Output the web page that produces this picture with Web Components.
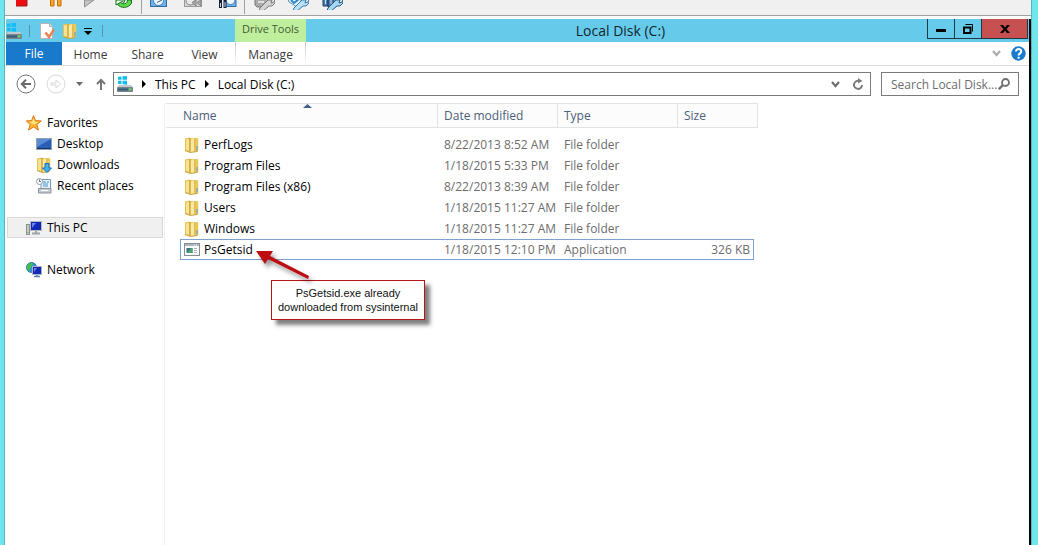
<!DOCTYPE html>
<html lang="en">
<head>
<meta charset="utf-8">
<title>Local Disk (C:)</title>
<style>
    html, body {
        height: 100%;
        margin: 0;
    }

    body {
        background: #6ee6ec;
        font-family: "Open Sans", "Noto Sans", sans-serif;
        font-size: 12px;
        color: #000;
        overflow: hidden;
    }
</style>
</head>
<body>
<remote-frame>
    <tool-strip slot="tools"></tool-strip>
    <explorer-window>
        <title-bar slot="top" heading="Local Disk (C:)" context="Drive Tools"></title-bar>
        <ribbon-tabs slot="top"></ribbon-tabs>
        <address-bar slot="top"></address-bar>
        <nav-pane slot="side">
            <nav-item icon="star">Favorites</nav-item>
            <nav-item icon="desktop" child>Desktop</nav-item>
            <nav-item icon="downloads" child>Downloads</nav-item>
            <nav-item icon="recent" child>Recent places</nav-item>
            <nav-item icon="computer" group current>This PC</nav-item>
            <nav-item icon="network" group>Network</nav-item>
        </nav-pane>
        <file-list></file-list>
        <call-out>PsGetsid.exe already<br>downloaded from sysinternal</call-out>
    </explorer-window>
</remote-frame>

<script>
const DRIVE = `
    <path d="M1 .8L4.500.4v3.400H1zM5.500.3L10 0v3.800H5.500zM1 4.800h3.500v3.400L1 7.800zM5.500 4.800H10v3.900l-4.500-.4z" fill="#12bdf5"/>
    <path d="M2 9h12l2 2.500H0z" fill="#c4c9cd"/>
    <rect y="11" width="16" height="5" rx="1" fill="#77828a"/>
    <rect x="1" y="12.500" width="10" height="2" fill="#2f5f7c"/>
    <rect x="12" y="12.500" width="2.500" height="1.800" fill="#5fe05d"/>`;

const FOLDER = `
    <path d="M1 1.500L6 .5v14.500L1 13.500z" fill="#e5c353"/>
    <path d="M2 2.500l3-.6v11.800l-3-.9z" fill="#f7e392"/>
    <path d="M6 1h7.500l.8 1v12l-1.300 1H6z" fill="#e9c95c"/>
    <path d="M6.500 2.500l4-1.500v13.500l-4 1z" fill="#f9e89f"/>
    <path d="M6 1v14.500" stroke="#c59c34"/>
    <path d="M10.800 1.500V14" stroke="#d6b044"/>
    <path d="M13 9v4.500" stroke="#4f9bd0"/>
    <path d="M1 13.500l5.300 2 7-1" stroke="#c9a23c" fill="none"/>`;

const WRENCH = (fill, line) => `
    <path d="M6 8l8-8h4l-1 3 3-1 1-2v3l-3 3-3 0-7 6-3-1z" fill="${fill}" stroke="${line}"/>`;

// name: [width, height, markup]
const ICONS = {
    stop: [12, 7, `<rect width="11" height="6" fill="#ed0c10"/><path d="M0 6h11V0" fill="none" stroke="#9c1c12"/>`],
    pause: [12, 7, `<path d="M.5 0v6h3.500V0M7.500 0v6h3.500V0" fill="#ffa51f" stroke="#b86f0c"/>`],
    play: [12, 8, `<path d="M.5 0v7L10 0z" fill="#c4c4c4" stroke="#8f8f8f"/>`],
    reload: [18, 9, `
        <path d="M2 3.500C5 9 14 8.500 16.500 3V0h-4c0 4-4 5-7 2.500z" fill="#5fdc4a" stroke="#13701c"/>
        <path d="M1 0h9L9 2.500 7 1.500 1 5z" fill="#f4fff0" stroke="#13701c"/>`],
    snapshot: [18, 9, `
        <rect x=".5" y="-4" width="16" height="10.500" fill="#6db2ea" stroke="#2c6ca3"/>
        <circle cx="8.500" cy=".5" r="5" fill="#edf7ff" stroke="#4c7ba8"/>
        <path d="M7 2.500l5-2.500" stroke="#355d86"/>`],
    revert: [19, 9, `
        <rect x=".5" y="-4" width="17" height="10.500" fill="#d4d4d4" stroke="#999"/>
        <circle cx="6.500" cy=".5" r="4.500" fill="#e8e8e8" stroke="#888"/>
        <path d="M12 0v6L8 2.500zM17 0v6l-4-3.500z" fill="#aaa" stroke="#888"/>`],
    manage: [19, 9, `
        <rect x="7.500" y="-4" width="10.500" height="10.500" fill="#6db2ea" stroke="#2c6ca3"/>
        <circle cx="12.500" cy="0" r="4.500" fill="#edf7ff" stroke="#4c7ba8"/>
        <path d="M2.500 0v8M7 0v8" stroke="#14213a" stroke-width="3"/><path d="M2.500 3v4M7 2v5" stroke="#c4d8e8"/>`],
    saveGray: [21, 10, `<path d="M1-3h13V7H3L1 5z" fill="#aaa" stroke="#777"/><path d="M4 2h6" stroke="#ddd" stroke-width="2"/>${WRENCH("#d3d3d3", "#7a7a7a")}`],
    check: [21, 10, `<path d="M0-1h14l-5 8-8-5z" fill="#e4f4fd" stroke="#5a93b8"/><path d="M3 0l3 3 5-4" stroke="#2f87c9" fill="none" stroke-width="2"/>${WRENCH("#b8e0f6", "#397aa5")}`],
    vmSet: [21, 10, `<path d="M1-3h5V6H1zM6-3h6V7H6z" fill="#4a7db0" stroke="#1f3f65"/><path d="M3.500 0v4M9 0v4" stroke="#cfe5f5"/>${WRENCH("#a5d7f3", "#275a87")}`],

    drive: [16, 16, DRIVE],
    folder: [15, 16, FOLDER],
    props: [15, 16, `
        <path d="M.5.500h9l3 3v12H.5z" fill="#fcfcfc" stroke="#b9b4b0"/>
        <path d="M9.500.5v3h3" fill="#ddd" stroke="#b9b4b0"/>
        <path d="M5.500 9.500l3.500 4.500 5-7.500" fill="none" stroke="#ec8352" stroke-width="2.500"/>`],
    custom: [8, 8, `<path d="M0 1.500h8" stroke="#000"/><path d="M0 4h8L4 8z"/>`],
    minimize: [10, 10, `<path d="M0 6.500h10" stroke="#000" stroke-width="3"/>`],
    restore: [10, 10, `<path d="M1 3.500h6.500v5.500H1z" fill="none" stroke="#000" stroke-width="2"/><path d="M2.500.5h7v7" fill="none" stroke="#000"/>`],
    close: [10, 10, `<path d="M0 1h3l2 2.500L7 1h3L6.500 5 10 9H7L5 6.500 3 9H0l3.500-4z"/>`],
    down: [9, 7, `<path d="M1 1l3.500 4L8 1" fill="none" stroke="currentColor" stroke-width="2.200"/>`],
    help: [15, 15, `<circle cx="7.500" cy="7.500" r="7.200" fill="#1979ca"/><path d="M5 5.600c0-3.300 5.200-3.300 5.200-.2 0 2-2.600 1.900-2.600 4M7.600 10.700v2" fill="none" stroke="#fff" stroke-width="2"/>`],
    back: [20, 20, `<circle cx="10" cy="10" r="9" fill="#fff" stroke="#737373"/><path d="M15 10H6.500M10 5.800L5.800 10l4.200 4.200" fill="none" stroke="#6b6b6b" stroke-width="2"/>`],
    forward: [20, 20, `<circle cx="10" cy="10" r="9" fill="#fff" stroke="#d9d9d9"/><path d="M5 9h5V6l4.500 4-4.500 4v-3H5z" fill="#fff" stroke="#d9d9d9"/>`],
    history: [7, 4, `<path d="M0 0h7L3.500 4z" fill="#6b6b6b"/>`],
    up: [10, 12, `<path d="M5 12V2M1 6l4-4 4 4" fill="none" stroke="#757575" stroke-width="2"/>`],
    crumb: [4, 8, `<path d="M0 0l4 4-4 4z"/>`],
    refresh: [12, 12, `<path d="M7 3a4 4 0 1 0 3 4" fill="none" stroke="#7a7a7a" stroke-width="2"/><path d="M6 0v5.500l4.500-2.500z" fill="#7a7a7a"/>`],
    search: [12, 12, `<circle cx="7.500" cy="4.500" r="3.500" fill="none" stroke="#6f6f6f" stroke-width="1.800"/><path d="M5 7L.8 11.200" stroke="#6f6f6f" stroke-width="2.400"/>`],
    sort: [9, 4, `<path d="M0 4l4.500-4L9 4z" fill="#44618d"/>`],

    star: [16, 16, `
        <path d="M7.500.6l2 5 5.800.3-4.500 3.600 1.700 5.600-5-3.100-5 3.100 1.700-5.600L.3 5.900l5.300-.3z" fill="#fdb62b" stroke="#e2761c"/>
        <path d="M7.500 3l1.300 3.800 3.700.2L8 9.500 3 7l3.200-.2z" fill="#ffe685"/>`],
    desktop: [16, 16, `
        <rect x=".5" y="2.500" width="15" height="11" fill="#2a5db5" stroke="#8fa3b8"/>
        <path d="M1 3h14L1 11z" fill="#6796da" opacity=".8"/><path d="M1 12.500h14" stroke="#1a3359"/>`],
    downloads: [16, 16, `${FOLDER}<path d="M9 6.500h4v4.500h2.500L11 15.500 6.500 11H9z" fill="#41b1f1" stroke="#1b6cb5"/>`],
    recent: [16, 16, `
        <path d="M5 1.500h9.500v9H5z" fill="#e3f2fc" stroke="#8296a5"/>
        <path d="M7 4h3M7 6h5M11 4h2M7 8h5" stroke="#4693c6"/>
        <path d="M2.500 10.500h12.500v4.500h-12.500z" fill="#c3cad0" stroke="#8a949c"/><path d="M5 12.500h7" stroke="#fff"/>
        <circle cx="3.500" cy="3.500" r="3" fill="#fff" stroke="#8e9aa5"/><path d="M3.500 1.500v2H5" fill="none" stroke="#667"/>`],
    computer: [16, 16, `
        <rect x=".5" y="4.500" width="3" height="10" fill="#c8ccc8" stroke="#8b908b"/><path d="M2 12v1" stroke="#3fb84a"/>
        <rect x="4.500" y="1.500" width="11" height="9" fill="#1428b8" stroke="#b4bac2"/>
        <path d="M6 3h4l-4 5z" fill="#6b86ec"/><path d="M10 11v2M6 13.500h8" stroke="#9aa1a8" stroke-width="2"/>`],
    network: [16, 16, `
        <circle cx="5.500" cy="5.500" r="5" fill="#2e8fe0" stroke="#3278af"/>
        <path d="M1.500 3c2-2.500 4.500-2.500 6-1L5 5 3.500 9C.5 8 .5 5 1.500 3z" fill="#46bd4a"/>
        <rect x="6.500" y="4.500" width="9" height="8" fill="#1428b8" stroke="#a9b3c4"/>
        <path d="M8 6h3L8 10z" fill="#6b86ec"/><path d="M11 13v1M8 14.500h6" stroke="#5c7fae" stroke-width="1.500"/>`],
    app: [16, 16, `
        <rect x=".5" y="1.500" width="15" height="12" fill="#fafafa" stroke="#858d95"/>
        <path d="M1 3h14" stroke="#aab4be" stroke-width="2"/><path d="M10 3h1M12 3h1" stroke="#fff"/>
        <path d="M2.500 6h6v5h-6z" fill="#3a7389"/><path d="M3 11l4-5h1.500v5z" fill="#4ea56c"/>
        <path d="M10 6.500h3M10 8.500h3M10 10.500h3" stroke="#a9b3bd"/>`]
};

class WinIcon extends HTMLElement {
    connectedCallback() {
        const [w, h, body] = ICONS[this.getAttribute('name')];
        this.attachShadow({ mode: 'open' });
        this.shadowRoot.innerHTML = `
            <style>
                :host { display: inline-flex; flex: none; }
                svg { display: block; }
            </style>
            <svg width="${w}" height="${h}" viewBox="0 0 ${w} ${h}" aria-hidden="true">${body}</svg>
        `;
    }
}

class RemoteFrame extends HTMLElement {
    connectedCallback() {
        this.attachShadow({ mode: 'open' });
        this.shadowRoot.innerHTML = `
            <style>
                :host {
                    display: flex;
                    flex-direction: column;
                    box-sizing: border-box;
                    height: 100vh;
                    margin: 0 6px 0 4px;
                    border-left: 1px solid #58b4bd;
                    border-right: 1px solid #58b4bd;
                    background: #fff;
                }
            </style>
            <slot name="tools"></slot>
            <slot></slot>
        `;
    }
}

class ToolStrip extends HTMLElement {
    connectedCallback() {
        const groups = [
            ['stop', 'pause', 'play', 'reload'],
            ['snapshot', 'revert', 'manage'],
            ['saveGray', 'check', 'vmSet']
        ];
        const button = name => `<button aria-label="${name}"><win-icon name="${name}"></win-icon></button>`;

        this.attachShadow({ mode: 'open' });
        this.shadowRoot.innerHTML = `
            <style>
                :host {
                    display: flex;
                    height: 15px;
                    background: #f0f0f0;
                    border-bottom: 1px solid #a0a0a0;
                    margin-bottom: 3px;
                }
                .group {
                    display: flex;
                    align-items: flex-start;
                    height: 14px;
                }
                .group + .group {
                    border-left: 1px solid #a0a0a0;
                }
                .group:last-child { padding-left: 2px; }
                button {
                    width: 34px;
                    display: flex;
                    justify-content: center;
                    padding: 0;
                    border: 0;
                    background: none;
                }
            </style>
            ${groups.map(g => `<div class="group">${g.map(button).join('')}</div>`).join('')}
        `;
    }
}

class ExplorerWindow extends HTMLElement {
    connectedCallback() {
        this.attachShadow({ mode: 'open' });
        this.shadowRoot.innerHTML = `
            <style>
                :host {
                    display: flex;
                    flex-direction: column;
                    flex: 1;
                    margin-left: 1px;
                    border-right: 2px solid #000;
                }
                .panes {
                    display: flex;
                    flex: 1;
                }
                main {
                    position: relative;
                    flex: 1;
                }
            </style>
            <slot name="top"></slot>
            <div class="panes">
                <slot name="side"></slot>
                <main><slot></slot></main>
            </div>
        `;
    }
}

class TitleBar extends HTMLElement {
    connectedCallback() {
        this.attachShadow({ mode: 'open' });
        this.shadowRoot.innerHTML = `
            <style>
                :host {
                    display: flex;
                    height: 23px;
                    background: #66cbea;
                }
                button {
                    display: flex;
                    align-items: center;
                    justify-content: center;
                    padding: 0;
                    border: 0;
                    background: none;
                }
                .quick {
                    display: flex;
                    align-items: center;
                    gap: 7px;
                    width: 229px;
                }
                .quick i {
                    width: 1px;
                    height: 12px;
                    background: #5d93a8;
                }
                .quick i:first-of-type { margin-right: 3px; }
                .quick button:last-of-type { margin-right: 3px; }
                .context {
                    width: 71px;
                    line-height: 20px;
                    text-align: center;
                    font-size: 11px;
                    color: #3f5a35;
                    background: #bfee9c;
                }
                h1 {
                    flex: 1;
                    margin: 0;
                    padding-left: 8px;
                    font-size: 14px;
                    font-weight: 400;
                    line-height: 23px;
                    text-align: center;
                    color: #12262e;
                }
                .controls {
                    display: flex;
                    height: 20px;
                    margin-right: 1px;
                }
                .controls button {
                    width: 27px;
                    border: 1px solid #1d3a44;
                    border-width: 0 0 1px 1px;
                }
                .controls .close {
                    width: 47px;
                    background: #c75050;
                    border-right-width: 1px;
                }
            </style>
            <div class="quick">
                <win-icon name="drive"></win-icon>
                <i></i>
                <button aria-label="Properties"><win-icon name="props"></win-icon></button>
                <button aria-label="New folder"><win-icon name="folder"></win-icon></button>
                <button aria-label="Customize"><win-icon name="custom"></win-icon></button>
                <i></i>
            </div>
            <div class="context">${this.getAttribute('context')}</div>
            <h1>${this.getAttribute('heading')}</h1>
            <div class="controls">
                <button aria-label="Minimize"><win-icon name="minimize"></win-icon></button>
                <button aria-label="Restore"><win-icon name="restore"></win-icon></button>
                <button class="close" aria-label="Close"><win-icon name="close"></win-icon></button>
            </div>
        `;
    }
}

class RibbonTabs extends HTMLElement {
    connectedCallback() {
        this.attachShadow({ mode: 'open' });
        this.shadowRoot.innerHTML = `
            <style>
                :host {
                    display: flex;
                    height: 23px;
                    border-bottom: 1px solid #d8d9db;
                }
                button {
                    width: 57px;
                    padding: 2px 0 0;
                    border: 0;
                    background: none;
                    font: inherit;
                    color: #3b3b3b;
                }
                .file {
                    width: 56px;
                    padding: 0;
                    color: #fff;
                    background: #1979ca;
                }
                .manage {
                    width: 71px;
                    margin-left: 2px;
                    border: solid;
                    border-width: 0 1px;
                    border-image: linear-gradient(#c4c4c4, #fff) 1;
                }
                .end {
                    display: flex;
                    align-items: center;
                    gap: 10px;
                    margin-left: auto;
                    padding-right: 3px;
                    color: #aaa;
                }
                .end button {
                    display: flex;
                    width: auto;
                    padding: 0;
                    color: inherit;
                }
            </style>
            <button class="file">File</button>
            <button>Home</button>
            <button>Share</button>
            <button>View</button>
            <button class="manage">Manage</button>
            <div class="end">
                <button aria-label="Expand ribbon"><win-icon name="down"></win-icon></button>
                <button aria-label="Help"><win-icon name="help"></win-icon></button>
            </div>
        `;
    }
}

class AddressBar extends HTMLElement {
    connectedCallback() {
        this.attachShadow({ mode: 'open' });
        this.shadowRoot.innerHTML = `
            <style>
                :host {
                    display: flex;
                    align-items: center;
                    padding: 6px 10px 7px 10px;
                }
                button {
                    display: flex;
                    align-items: center;
                    padding: 0;
                    border: 0;
                    background: none;
                    font: inherit;
                    color: inherit;
                }
                .moves {
                    display: flex;
                    align-items: center;
                    gap: 10px;
                    width: 97px;
                }
                .moves button:nth-child(4) { margin-left: 3px; }
                .path, .search {
                    display: flex;
                    align-items: center;
                    box-sizing: border-box;
                    height: 24px;
                    border: 1px solid #7b7b7b;
                }
                .path {
                    flex: 1;
                    gap: 9px;
                    padding: 0 6px 0 3px;
                }
                .tail {
                    display: flex;
                    align-items: center;
                    gap: 12px;
                    margin-left: auto;
                    color: #6f6f6f;
                }
                .search {
                    width: 138px;
                    margin-left: 10px;
                    padding: 0 8px 0 9px;
                }
                input {
                    flex: 1;
                    min-width: 0;
                    padding: 0;
                    border: 0;
                    outline: 0;
                    background: none;
                    font: inherit;
                }
                input::placeholder {
                    color: #6d6d6d;
                    opacity: 1;
                }
            </style>
            <div class="moves">
                <button aria-label="Back"><win-icon name="back"></win-icon></button>
                <button aria-label="Forward"><win-icon name="forward"></win-icon></button>
                <button aria-label="Recent locations"><win-icon name="history"></win-icon></button>
                <button aria-label="Up"><win-icon name="up"></win-icon></button>
            </div>
            <div class="path">
                <win-icon name="drive"></win-icon>
                <win-icon name="crumb"></win-icon>
                <button>This PC</button>
                <win-icon name="crumb"></win-icon>
                <button>Local Disk (C:)</button>
                <div class="tail">
                    <button aria-label="Previous locations"><win-icon name="down"></win-icon></button>
                    <button aria-label="Refresh"><win-icon name="refresh"></win-icon></button>
                </div>
            </div>
            <div class="search">
                <input type="text" aria-label="Search" placeholder="Search Local Disk...">
                <button aria-label="Search"><win-icon name="search"></win-icon></button>
            </div>
        `;
    }
}

class NavPane extends HTMLElement {
    connectedCallback() {
        this.attachShadow({ mode: 'open' });
        this.shadowRoot.innerHTML = `
            <style>
                :host {
                    display: block;
                    box-sizing: border-box;
                    width: 159px;
                    padding: 9px 1px 0 1px;
                    border-right: 1px solid #f2f2f2;
                }
            </style>
            <nav><slot></slot></nav>
        `;
    }
}

class NavItem extends HTMLElement {
    connectedCallback() {
        this.attachShadow({ mode: 'open' });
        this.shadowRoot.innerHTML = `
            <style>
                :host { display: block; }
                :host([group]) { margin-top: 21px; }
                a {
                    display: flex;
                    align-items: center;
                    gap: 5px;
                    box-sizing: border-box;
                    height: 21px;
                    padding-left: 18px;
                    border: 1px solid transparent;
                    color: #000;
                    text-decoration: none;
                }
                :host([child]) a { padding-left: 28px; }
                :host([current]) a {
                    background: #f0f0f0;
                    border-color: #d9d9d9;
                }
            </style>
            <a href="#"><win-icon name="${this.getAttribute('icon')}"></win-icon><slot></slot></a>
        `;
    }
}

class FileList extends HTMLElement {
    connectedCallback() {
        const files = [
            ['PerfLogs', '8/22/2013 8:52 AM', 'File folder', ''],
            ['Program Files', '1/18/2015 5:33 PM', 'File folder', ''],
            ['Program Files (x86)', '8/22/2013 8:39 AM', 'File folder', ''],
            ['Users', '1/18/2015 11:27 AM', 'File folder', ''],
            ['Windows', '1/18/2015 11:27 AM', 'File folder', ''],
            ['PsGetsid', '1/18/2015 12:10 PM', 'Application', '326 KB']
        ];
        const row = ([name, date, type, size]) => `
            <tr class="${size ? 'selected' : ''}">
                <td><div><win-icon name="${size ? 'app' : 'folder'}"></win-icon><span>${name}</span></div></td>
                <td><div>${date}</div></td>
                <td><div>${type}</div></td>
                <td><div>${size}</div></td>
            </tr>`;

        this.attachShadow({ mode: 'open' });
        this.shadowRoot.innerHTML = `
            <style>
                :host {
                    display: block;
                    padding-left: 1px;
                }
                table {
                    width: 592px;
                    table-layout: fixed;
                    border-spacing: 0;
                    color: #6d6d6d;
                }
                .name { width: 272px; }
                .mid { width: 120px; }
                th {
                    box-sizing: border-box;
                    height: 25px;
                    padding: 0 6px;
                    border: 1px solid #e2e3e6;
                    border-left: 0;
                    background: #fcfcfc;
                    font-weight: 400;
                    text-align: left;
                    color: #4c607a;
                }
                th:first-child {
                    position: relative;
                    padding-left: 17px;
                }
                .sort {
                    position: absolute;
                    top: 0;
                    left: 137px;
                }
                .gap td { height: 6px; }
                td { padding: 0; }
                td div {
                    display: flex;
                    align-items: center;
                    box-sizing: border-box;
                    height: 21px;
                    padding-left: 6px;
                    border: solid transparent;
                    border-width: 1px 0;
                    white-space: nowrap;
                }
                td:first-child { padding-left: 14px; }
                td:first-child div {
                    padding-left: 3px;
                    border-left-width: 1px;
                    color: #000;
                }
                td win-icon { width: 20px; }
                td:last-child { padding-right: 4px; }
                td:last-child div {
                    justify-content: flex-end;
                    padding-right: 3px;
                    border-right-width: 1px;
                }
                .selected div { border-color: #7da2ce; }
            </style>
            <table>
                <colgroup><col class="name"><col class="mid"><col class="mid"><col></colgroup>
                <thead>
                    <tr>
                        <th>Name<win-icon class="sort" name="sort"></win-icon></th>
                        <th>Date modified</th>
                        <th>Type</th>
                        <th>Size</th>
                    </tr>
                </thead>
                <tbody>
                    <tr class="gap"><td colspan="4"></td></tr>
                    ${files.map(row).join('')}
                </tbody>
            </table>
        `;
    }
}

class CallOut extends HTMLElement {
    connectedCallback() {
        this.attachShadow({ mode: 'open' });
        this.shadowRoot.innerHTML = `
            <style>
                /* floats over the file rows, arrow tip on the selected name */
                :host {
                    position: absolute;
                    top: 177px;
                    left: 106px;
                    font-family: "Liberation Sans", Arial, sans-serif;
                    font-size: 11px;
                    line-height: 14px;
                    text-align: center;
                    white-space: nowrap;
                    color: #111;
                }
                .box {
                    box-sizing: border-box;
                    width: 154px;
                    padding: 5px 0;
                    border: 1px solid #b51318;
                    background: #fff;
                    box-shadow: 5px 5px 4px rgba(0, 0, 0, .5);
                }
                svg {
                    position: absolute;
                    left: -16px;
                    bottom: 100%;
                    overflow: visible;
                    filter: drop-shadow(3px 4px 2px rgba(0, 0, 0, .4));
                }
            </style>
            <svg width="56" height="30" viewBox="0 0 56 30">
                <path d="M1 1h17l-3 5L54 26l-1 3L13 9l-3 5z" fill="#c00d12"/>
            </svg>
            <div class="box"><slot></slot></div>
        `;
    }
}

customElements.define('win-icon', WinIcon);
customElements.define('remote-frame', RemoteFrame);
customElements.define('tool-strip', ToolStrip);
customElements.define('explorer-window', ExplorerWindow);
customElements.define('title-bar', TitleBar);
customElements.define('ribbon-tabs', RibbonTabs);
customElements.define('address-bar', AddressBar);
customElements.define('nav-pane', NavPane);
customElements.define('nav-item', NavItem);
customElements.define('file-list', FileList);
customElements.define('call-out', CallOut);
</script>
</body>
</html>
